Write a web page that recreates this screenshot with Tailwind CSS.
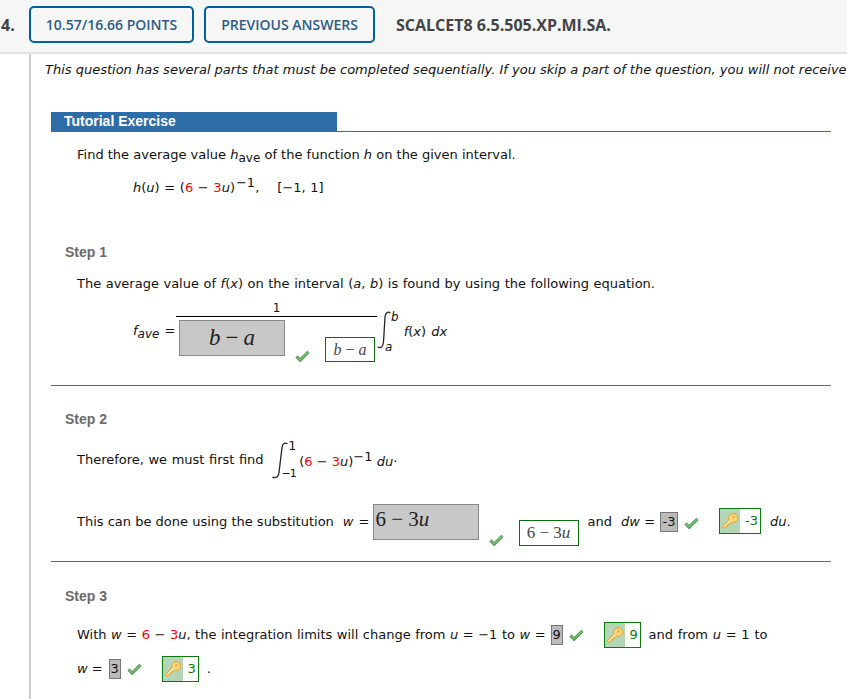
<!DOCTYPE html>
<html lang="en">
<head>
    <meta charset="UTF-8">
    <title>SCALCET8 6.5.505.XP.MI.SA.</title>
    <script src="https://cdn.jsdelivr.net/npm/@tailwindcss/browser@4"></script>
</head>
<body class="bg-white overflow-hidden h-[699px] font-['DejaVu_Sans',sans-serif] text-[13px] leading-[18px] text-[#111]">
    <svg class="hidden">
        <symbol id="check" viewBox="0 0 16 13">
            <path d="M1.500 7l4 4L14.500 2" fill="none" stroke="#4f984f" stroke-width="3.400"/>
            <path d="M1.800 7l3.700 3.700L14.300 2.200" fill="none" stroke="#7cc07c" stroke-width="1.400"/>
        </symbol>
        <symbol id="key" viewBox="0 0 18 18">
            <path d="M3 16.500L1.200 14.800 7.500 8.300C7 5 9 2 12 1.700c3-.3 5 2 4.700 4.600-.3 3-3.200 4.800-6.200 4l-1.300 1.300-1.200-.3.200 1.500-1.300.7-.8-.7-.3 1.700-1.300.4z" fill="#fbd777" stroke="#e2a03a" stroke-width="1"/>
            <path d="M3.500 14.500L9 9" stroke="#fff0b8" stroke-width="1"/>
            <circle cx="12.500" cy="5.300" r="1.300" fill="#e9b04f"/>
        </symbol>
    </svg>

    <!-- question header -->
    <header class="h-[54px] bg-[#f6f6f6] border-b-2 border-[#e2e2e2] flex items-center font-['Open_Sans',sans-serif] pb-[3px]">
        <span class="w-[29px] pl-[1px] text-[16px] font-bold text-[#444]">4.</span>
        <a class="w-[165px] h-[37px] border-2 border-[#00609c] rounded-[5px] flex items-center justify-center text-[14px] font-semibold text-[#2d5d85]">10.57/16.66 POINTS</a>
        <a class="ml-[10px] w-[171px] h-[37px] border-2 border-[#00609c] rounded-[5px] flex items-center justify-center text-[14px] font-semibold text-[#2d5d85]">PREVIOUS ANSWERS</a>
        <span class="ml-[21px] text-[16px] font-bold text-[#444]">SCALCET8 6.5.505.XP.MI.SA.</span>
    </header>

    <main class="ml-[29px] h-[645px] border-l-2 border-[#cccccc] whitespace-nowrap overflow-hidden">
        <p class="ml-[14px] mt-[7px] italic">This question has several parts that must be completed sequentially. If you skip a part of the question, you will not receive any points for the skipped part.</p>

        <div class="ml-[20px] w-[780px]">
            <!-- tutorial -->
            <div class="mt-[33px] border-b border-[#2f6da8] h-[20px]">
                <div class="w-[286px] h-[19px] bg-[#2f6da8] pl-[13px] text-white font-['Liberation_Sans',sans-serif] font-bold text-[14px] leading-[19px]">Tutorial Exercise</div>
            </div>
            <p class="ml-[26px] mt-[14px]">Find the average value <i>h</i><sub class="text-[12px]">ave</sub> of the function <i>h</i> on the given interval.</p>
            <p class="ml-[82px] mt-[15px] [word-spacing:0.500px]"><i>h</i>(<i>u</i>) = (<span class="text-[#f00]">6</span> − <span class="text-[#f00]">3</span><i>u</i>)<sup class="ml-[1px] text-[13px] top-[-0.350em]">−1</sup>,<span class="ml-[18px]">[−1, 1]</span></p>

            <!-- step 1 -->
            <h3 class="ml-[14px] mt-[46px] font-['Liberation_Sans',sans-serif] font-bold text-[14px] text-[#6b6b6b]">Step 1</h3>
            <p class="ml-[26px] mt-[14px] [word-spacing:0.400px]">The average value of <i>f</i>(<i>x</i>) on the interval (<i>a</i>, <i>b</i>) is found by using the following equation.</p>
            <div class="ml-[82px] mt-[8px] h-[70px] flex items-start">
                <span class="mt-[21px] w-[43px] italic">f<sub class="text-[12px]">ave</sub> <span class="ml-[1px] not-italic">=</span></span>
                <div class="w-[201px]">
                    <div class="text-center text-[12px] leading-[15px]">1</div>
                    <div class="border-t-[1.500px] border-black flex items-start pt-[3px]">
                        <div class="ml-[3px] w-[106px] h-[36px] bg-[#c8c8c8] border border-[#888] flex items-center justify-center font-['Liberation_Serif',serif] text-[23px] text-[#222]"><i>b</i><span class="mx-[5px]">−</span><i>a</i></div>
                        <svg class="ml-[10px] mt-[30px] w-[15px] h-[12px]"><use href="#check"/></svg>
                        <div class="ml-[15px] mt-[17px] w-[50px] h-[25px] border border-[#0a6e0a] flex items-center justify-center font-['Liberation_Serif',serif] text-[16px] text-[#444]"><i>b</i><span class="mx-[4px]">−</span><i>a</i></div>
                    </div>
                </div>
                <svg class="mt-[10px] w-[14px] h-[38px]" viewBox="0 0 14 38" fill="none" stroke="#222" stroke-width="1.300"><path d="M13.500 2C10.500 0 8.500 2 8 6L6.500 31C6 36 4 37.500 .5 36"/></svg>
                <div class="flex flex-col justify-between h-[44px] mt-[9px] text-[12px] leading-[14px] italic"><span>b</span><span class="-ml-[6px]">a</span></div>
                <span class="ml-[5px] mt-[22px] italic [word-spacing:1px]">f<span class="not-italic">(</span>x<span class="not-italic">)</span> dx</span>
            </div>
            <div class="mt-[14px] border-t border-[#666]"></div>

            <!-- step 2 -->
            <h3 class="ml-[14px] mt-[24px] font-['Liberation_Sans',sans-serif] font-bold text-[14px] text-[#6b6b6b]">Step 2</h3>
            <div class="ml-[26px] mt-[9px] h-[46px] flex items-center">
                <span class="[word-spacing:0.400px]">Therefore, we must first find</span>
                <svg class="ml-[8px] w-[16px] h-[37px]" viewBox="0 0 16 40" preserveAspectRatio="none" fill="none" stroke="#222" stroke-width="1.300"><path d="M15.500 2C12 0 10.500 2 10 6L7 33C6.500 38 4 39.500 .5 38"/></svg>
                <div class="flex flex-col justify-between h-[42px] text-[12px] leading-[14px]"><span class="ml-[1px]">1</span><span class="-ml-[6px] text-[11px] tracking-[-1px]">−1</span></div>
                <span class="ml-[3px] mt-[3px]">(<span class="text-[#f00]">6</span> − <span class="text-[#f00]">3</span><i>u</i>)<sup class="text-[13px] top-[-0.350em]">−1</sup> <i>du</i>·</span>
            </div>
            <div class="ml-[26px] mt-[21px] h-[40px] flex items-start">
                <span class="mt-[9px]">This can be done using the substitution</span>
                <span class="ml-[9px] mt-[9px] [word-spacing:1px]"><i>w</i> =</span>
                <div class="ml-[3px] w-[106px] h-[36px] bg-[#c8c8c8] border border-[#888] pl-[2px] font-['Liberation_Serif',serif] text-[21px] leading-[29px] text-[#222]">6 − 3<i>u</i></div>
                <svg class="ml-[10px] mt-[30px] w-[15px] h-[12px]"><use href="#check"/></svg>
                <div class="ml-[15px] mt-[16px] w-[60px] h-[26px] border border-[#0a6e0a] flex items-center justify-center font-['Liberation_Serif',serif] text-[17px] text-[#444]">6 − 3<i>u</i></div>
                <span class="ml-[9px] mt-[9px]">and <i class="ml-[5px]">dw</i> =</span>
                <div class="ml-[5px] mt-[8px] w-[18px] h-[20px] bg-[#bbbbbb] border border-[#777] flex items-center justify-center">-3</div>
                <svg class="ml-[6px] mt-[13px] w-[15px] h-[12px]"><use href="#check"/></svg>
                <div class="ml-[20px] mt-[4px] w-[42px] h-[26px] border border-[#0a7a0a] flex">
                    <div class="w-[20px] bg-[#b5d6b5] flex items-center justify-center"><svg class="w-[18px] h-[18px]"><use href="#key"/></svg></div>
                    <span class="flex-1 pl-[3px] text-center text-[#0a7a0a] leading-[24px]">-3</span>
                </div>
                <span class="ml-[9px] mt-[9px]"><i>du</i>.</span>
            </div>
            <div class="mt-[17px] border-t border-[#666]"></div>

            <!-- step 3 -->
            <h3 class="ml-[14px] mt-[25px] font-['Liberation_Sans',sans-serif] font-bold text-[14px] text-[#6b6b6b]">Step 3</h3>
            <div class="ml-[26px] mt-[17px] h-[26px] flex items-center">
                <span class="[word-spacing:0.400px]">With <i>w</i> = <span class="text-[#f00]">6</span> − <span class="text-[#f00]">3</span><i>u</i>, the integration limits will change from <i>u</i> = −1 to <i>w</i> =</span>
                <div class="ml-[5px] w-[12px] h-[20px] bg-[#bbbbbb] border border-[#777] flex items-center justify-center">9</div>
                <svg class="ml-[6px] w-[15px] h-[12px]"><use href="#check"/></svg>
                <div class="ml-[20px] w-[37px] h-[26px] border border-[#0a7a0a] flex">
                    <div class="w-[20px] bg-[#b5d6b5] flex items-center justify-center"><svg class="w-[18px] h-[18px]"><use href="#key"/></svg></div>
                    <span class="flex-1 pl-[3px] text-center text-[#0a7a0a] leading-[24px]">9</span>
                </div>
                <span class="ml-[8px] [word-spacing:0.600px]">and from <i>u</i> = 1 to</span>
            </div>
            <div class="ml-[26px] mt-[8px] h-[26px] flex items-center">
                <span><i>w</i> =</span>
                <div class="ml-[6px] w-[12px] h-[20px] bg-[#bbbbbb] border border-[#777] flex items-center justify-center">3</div>
                <svg class="ml-[6px] w-[15px] h-[12px]"><use href="#check"/></svg>
                <div class="ml-[20px] w-[37px] h-[26px] border border-[#0a7a0a] flex">
                    <div class="w-[20px] bg-[#b5d6b5] flex items-center justify-center"><svg class="w-[18px] h-[18px]"><use href="#key"/></svg></div>
                    <span class="flex-1 pl-[3px] text-center text-[#0a7a0a] leading-[24px]">3</span>
                </div>
                <span class="ml-[8px]">.</span>
            </div>
        </div>
    </main>
</body>
</html>
